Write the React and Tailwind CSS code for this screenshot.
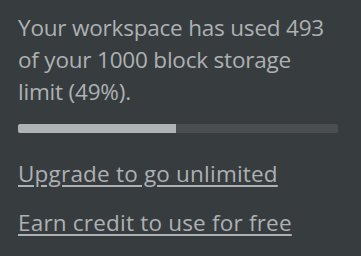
import React from 'react';

const App = () => {
  const used = 493;
  const limit = 1000;
  const pct = Math.round((used / limit) * 100);

  return (
    <div
      className="w-[361px] h-[256px] bg-[#373c3f] text-[#aeb1b3] px-[18px] pt-[12px] overflow-hidden"
      style={{ fontFamily: '"Open Sans", "Noto Sans", sans-serif' }}
    >
      <p className="w-[316px] text-[22.5px] leading-[32px] tracking-[-0.2px]">
        Your workspace has used {used} of your {limit} block storage limit ({pct}%).
      </p>
      <div className="mt-[16px] h-[9px] w-[320px] rounded-[2px] bg-[#4a4e51] overflow-hidden">
        <div className="h-full bg-[#b0b3b5]" style={{ width: `${(used / limit) * 100}%` }} />
      </div>
      <div className="mt-[25px] flex flex-col gap-[17px] text-[22.5px] leading-[32px] tracking-[0.2px]">
        <a href="#" className="underline underline-offset-[3px] self-start">Upgrade to go unlimited</a>
        <a href="#" className="underline underline-offset-[3px] self-start">Earn credit to use for free</a>
      </div>
    </div>
  );
};

export default App;
